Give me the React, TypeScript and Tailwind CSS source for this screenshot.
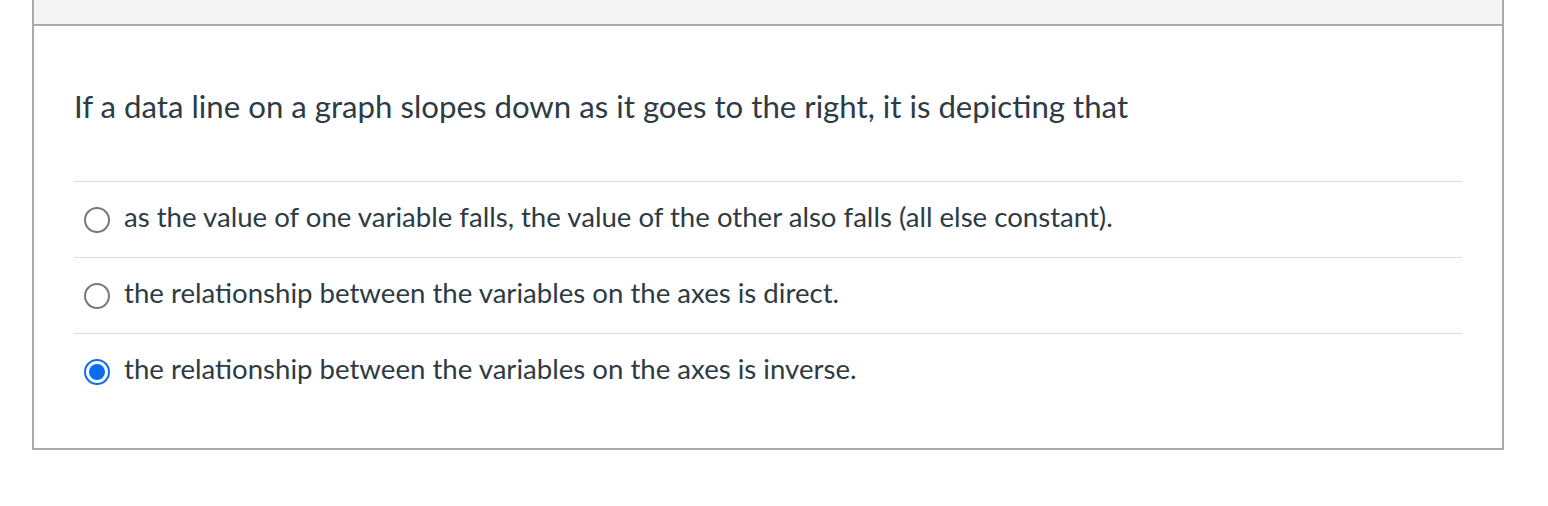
import React from "react";

const answers = [
  { text: "as the value of one variable falls, the value of the other also falls (all else constant).", selected: false },
  { text: "the relationship between the variables on the axes is direct.", selected: false },
  { text: "the relationship between the variables on the axes is inverse.", selected: true },
];

function Radio({ selected }: { selected: boolean }) {
  if (selected) {
    return (
      <span className="flex h-[26px] w-[26px] shrink-0 items-center justify-center rounded-full border-[2px] border-[#0b6cf5] bg-white">
        <span className="h-[16px] w-[16px] rounded-full bg-[#0b6cf5]" />
      </span>
    );
  }
  return <span className="h-[26px] w-[26px] shrink-0 rounded-full border-[2px] border-[#777777] bg-white" />;
}

export default function App() {
  return (
    <div className="h-[506px] w-[1548px] bg-white" style={{ fontFamily: "Lato, 'Noto Sans', sans-serif" }}>
      <div className="ml-[32px] w-[1472px] border-[2px] border-t-0 border-[#aaaaaa]">
        <div className="h-[26px] border-b-[2px] border-[#aaaaaa] bg-[#f5f5f5]" />
        <div className="px-[40px] pb-[39px] pt-[60px]">
          <div className="text-[31.2px] leading-[40px] text-[#2d3b45]">
            If a data line on a graph slopes down as it goes to the right, it is depicting that
          </div>
          <div className="mt-[55px]">
            {answers.map((a, i) => (
              <div key={i} className="flex h-[76px] items-center gap-[14px] border-t border-[#dddddd] pl-[10px]">
                <Radio selected={a.selected} />
                <span className="mb-[6px] text-[27.6px] leading-[36px] text-[#2d3b45]">{a.text}</span>
              </div>
            ))}
          </div>
        </div>
      </div>
    </div>
  );
}
